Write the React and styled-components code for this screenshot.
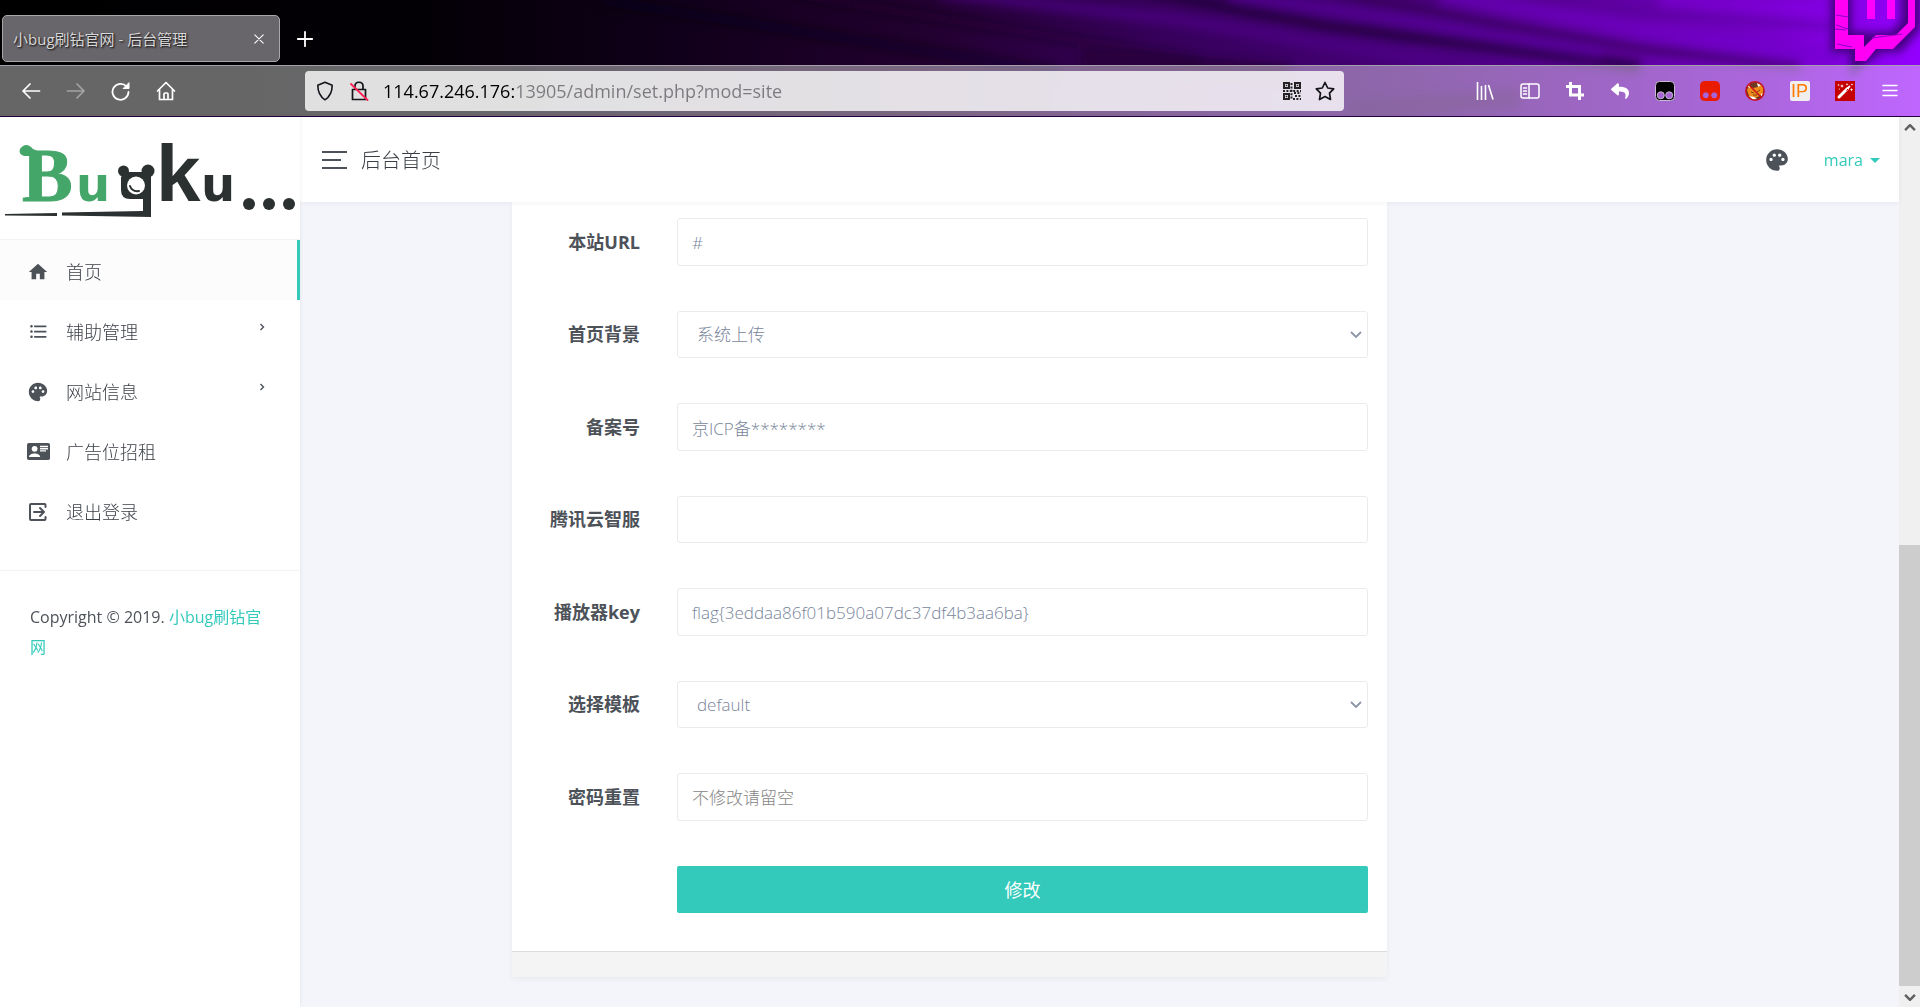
import React from 'react';
import styled, { createGlobalStyle } from 'styled-components';
import { MdHome, MdFormatListBulleted, MdPalette } from 'react-icons/md';
import { FaReply } from 'react-icons/fa';

const teal = '#33cabb';
const ink = '#4d5259';
const thinInk = '#3a3f46';
const fieldInk = '#78859a';
const rule = '#ebebeb';

const GlobalStyle = createGlobalStyle`
  *, *::before, *::after { box-sizing: border-box; }
  body {
    margin: 0;
    overflow: hidden;
    color: ${ink};
    background: #f4f5fa;
    font: 400 16px/24px 'Open Sans', 'Noto Sans CJK SC', sans-serif;
  }
  button, input, select { font: inherit; margin: 0; }
  button { padding: 0; border: 0; background: none; color: inherit; cursor: pointer; }
  a { color: ${teal}; text-decoration: none; }
  svg { display: block; flex: none; }
`;

const Window = styled.div`
  display: flex;
  flex-direction: column;
  height: 100vh;
`;

/* ---------- browser chrome ---------- */

const Chrome = styled.header`
  position: relative;
  flex: none;
  overflow: hidden;
  isolation: isolate;
  background: linear-gradient(90deg, #000 0%, #030005 22%, #0f0018 34%, #22002f 48%, #36005a 60%, #440074 72%, #5a0098 82%, #7500c8 92%, #9400ff 100%);
`;

const ThemeArt = styled.svg`
  position: absolute;
  top: 0;
  right: 0;
  z-index: -1;
`;

const TabStrip = styled.div`
  display: flex;
  align-items: center;
  gap: 5px;
  height: 65px;
  padding: 12px 2px 0;
`;

const Tab = styled.div`
  display: flex;
  align-items: center;
  justify-content: space-between;
  width: 278px;
  height: 47px;
  padding: 0 10px;
  border: 1px solid #a9a7aa;
  border-radius: 5px;
  background: #69666b;
  color: #d8d8d8;
  font-size: 15px;
  text-shadow: 1px 1px 2px #000;
`;

const StripButton = styled.button`
  display: grid;
  place-items: center;
  width: ${p => p.$size}px;
  height: ${p => p.$size}px;
  color: #fff;
`;

const Toolbar = styled.nav`
  display: flex;
  align-items: center;
  height: 52px;
  padding: 0 8px;
  border-top: 1px solid #a49fa8;
  border-bottom: 1px solid #24003c;
  background: rgba(255, 255, 255, 0.4);
`;

const ToolButton = styled.button`
  display: grid;
  place-items: center;
  width: 45px;
  height: 40px;
  color: #fff;
  opacity: ${p => (p.disabled ? 0.4 : 1)};
`;

const UrlBar = styled.div`
  display: flex;
  flex: 1;
  align-items: center;
  gap: 14px;
  height: 40px;
  margin: 0 118px 0 117px;
  padding: 0 9px 0 10px;
  border-radius: 4px;
  background: rgba(255, 255, 255, 0.8);
  color: #15141a;
`;

const UrlInput = styled.input`
  flex: 1;
  min-width: 0;
  height: 40px;
  padding: 0;
  border: 0;
  outline: 0;
  font-size: 18px;
  color: transparent;
  background: linear-gradient(90deg, #000 131px, #7c797e 131px);
  background-clip: text;
  -webkit-background-clip: text;
`;

const IpBadge = styled.span`
  display: grid;
  place-items: center;
  width: 20px;
  height: 20px;
  border-radius: 2px;
  background: #f0eeee;
  color: #ff7a00;
  font: 400 18px/20px 'Liberation Sans', sans-serif;
`;

const WandBadge = styled.span`
  display: grid;
  place-items: center;
  width: 20px;
  height: 20px;
  background: #c40000;
`;

/* ---------- page ---------- */

const Page = styled.div`
  display: flex;
  flex: 1;
  min-height: 0;
`;

const Sidebar = styled.aside`
  flex: none;
  width: 300px;
  background: #fff;
  box-shadow: 0 0 4px rgba(0, 0, 0, 0.08);
  z-index: 2;
`;

const Brand = styled.a`
  display: block;
  height: 123px;
  border-bottom: 1px solid #f3f3f3;
`;

const Menu = styled.ul`
  margin: 0;
  padding: 0 0 30px;
  border-bottom: 1px solid #f3f3f3;
  list-style: none;
`;

const MenuLink = styled.a`
  display: grid;
  grid-template-columns: 22px 1fr 6px;
  align-items: center;
  column-gap: 17px;
  height: 60px;
  padding: 3px 32px 0 27px;
  border-right: 3px solid ${p => (p.$active ? teal : 'transparent')};
  background: ${p => (p.$active ? '#fcfcfc' : '#fff')};
  color: ${thinInk};
  font-size: 18px;
  font-weight: 300;

  & > svg { justify-self: center; color: ${ink}; }
  & > svg:last-child { margin-bottom: 9px; }
`;

const Copyright = styled.p`
  margin: 0;
  padding: 31px 30px;
  font-size: 16px;
  line-height: 30px;
`;

const Main = styled.main`
  display: flex;
  flex: 1;
  flex-direction: column;
  min-width: 0;
`;

const TopBar = styled.div`
  display: flex;
  flex: none;
  align-items: center;
  height: 85px;
  padding: 1px 19px 0 22px;
  background: #fff;
  box-shadow: 0 1px 6px rgba(0, 0, 0, 0.05);
  z-index: 1;
`;

const TopTitle = styled.h1`
  flex: 1;
  margin: 0 0 0 14px;
  padding-top: 2px;
  color: ${thinInk};
  font-size: 20px;
  line-height: 30px;
  font-weight: 300;
`;

const UserMenu = styled.button`
  display: flex;
  align-items: center;
  gap: 7px;
  margin-left: 34px;
  color: ${teal};
`;

const Content = styled.div`
  display: grid;
  grid-template-columns: 212fr 875fr 512fr;
  align-items: start;
`;

const Card = styled.form`
  grid-column: 2;
  background: #fff;
  box-shadow: 0 2px 6px rgba(0, 0, 0, 0.05);
`;

const Fields = styled.div`
  display: grid;
  gap: 45px;
  padding: 16px 19px 38px 34px;
`;

const Field = styled.div`
  display: grid;
  grid-template-columns: 94px 1fr;
  column-gap: 37px;
  align-items: center;
  height: 48px;

  &:nth-child(even) { height: 47px; }
`;

const Label = styled.label`
  justify-self: end;
  padding-bottom: 1px;
  font-size: 18px;
  font-weight: 700;
  white-space: nowrap;
`;

const Input = styled.input`
  width: 100%;
  height: 100%;
  padding: 1px 14px 0;
  border: 1px solid ${rule};
  border-radius: 3px;
  outline: 0;
  background: #fff;
  color: ${fieldInk};
  font-size: 17px;
  font-weight: 300;

  &::placeholder { color: #858585; opacity: 1; }
`;

const SelectBox = styled.div`
  display: grid;
  align-items: center;
  height: 100%;

  & > * { grid-area: 1 / 1; }
  & > svg {
    justify-self: end;
    margin-right: 6px;
    pointer-events: none;
    color: #8b95a5;
  }
`;

const Select = styled.select`
  width: 100%;
  height: 100%;
  padding: 1px 19px 0;
  border: 1px solid ${rule};
  border-radius: 3px;
  outline: 0;
  appearance: none;
  background: #fff;
  color: ${fieldInk};
  font-size: 17px;
  font-weight: 300;
`;

const Submit = styled.button`
  grid-column: 2;
  height: 100%;
  border-radius: 2px;
  background: ${teal};
  color: #fff;
  font-size: 18px;
`;

const CardFooter = styled.div`
  height: 26px;
  border-top: 1px solid #dcdcdc;
  background: #f4f4f4;
`;

const Scrollbar = styled.div`
  display: flex;
  flex: none;
  flex-direction: column;
  justify-content: space-between;
  width: 21px;
  background: #f0f0f0;
  color: #606060;
`;

const ScrollArrow = styled.button`
  display: grid;
  place-items: center;
  height: 21px;
`;

const ScrollTrack = styled.div`
  display: flex;
  flex: 1;
  flex-direction: column;
  justify-content: flex-end;
`;

const ScrollThumb = styled.div`
  height: 52%;
  background: #cdcdcd;
`;

/* ---------- drawings ---------- */

const Line = ({ size = 20, width = 2, children, ...rest }) => (
  <svg width={size} height={size} viewBox="0 0 20 20" fill="none" stroke="currentColor"
    strokeWidth={width} strokeLinecap="round" strokeLinejoin="round" aria-hidden="true" {...rest}>
    {children}
  </svg>
);

const Theme = () => (
  <ThemeArt width="1920" height="117" viewBox="0 0 1920 117" aria-hidden="true">
    <defs>
      <filter id="soft" x="-10%" y="-100%" width="120%" height="300%"><feGaussianBlur stdDeviation="5" /></filter>
      <filter id="halo" x="-50%" y="-50%" width="200%" height="200%"><feGaussianBlur stdDeviation="4" /></filter>
    </defs>
    <g filter="url(#soft)" fill="none">
      <path d="M600 0 L1060 72" stroke="#0b0012" strokeWidth="10" opacity=".4" />
      <path d="M790 -6 L1200 60" stroke="#14001f" strokeWidth="9" opacity=".35" />
      <path d="M1080 58 L1290 72" stroke="#1c002b" strokeWidth="18" opacity=".55" />
      <path d="M940 -8 L1180 20 L1440 62" stroke="#50008a" strokeWidth="14" opacity=".6" />
      <path d="M1150 -8 L1320 25 L1500 48 L1640 66" stroke="#22003a" strokeWidth="12" opacity=".75" />
      <path d="M1230 -6 L1440 26 L1600 52" stroke="#5c00a4" strokeWidth="12" opacity=".6" />
      <path d="M1340 -6 L1492 24 L1640 48 L1800 66" stroke="#30004e" strokeWidth="10" opacity=".6" />
      <path d="M1440 -6 L1640 30 L1840 58" stroke="#7200cc" strokeWidth="18" opacity=".55" />
      <path d="M1610 10 L1830 26" stroke="#500090" strokeWidth="8" opacity=".4" />
      <path d="M1660 0 L1830 10" stroke="#8600e8" strokeWidth="14" opacity=".4" />
      <path d="M1350 112 L1520 98" stroke="#2c0048" strokeWidth="20" opacity=".4" />
    </g>
    <path d="M1841 -8 V42 H1860 V56 L1878 42 H1896 L1911 25 V-8" fill="none" stroke="#2c0058" strokeWidth="20" opacity=".75" filter="url(#halo)" />
    <path d="M1835 0 H1848 V35 H1864 V47 L1876 35 H1896 L1908 23 V0 H1915 V27 L1893 49 H1876 L1866 61 H1855 V49 H1835 Z" fill="#ff00f5" />
    <path d="M1867 0 H1875 V19 H1867 Z M1887 0 H1895 V19 H1887 Z" fill="#f0f" />
    <path d="M1836 15 L1848 17 M1836 25 L1848 29 M1835 29 L1846 30 M1837 44 L1852 47 M1872 38 L1902 34" stroke="#8a00c8" strokeWidth="1" />
  </ThemeArt>
);

const Shield = () => (
  <Line width="1.6"><path d="M10 1.2 L17.2 4.2 C17.2 11 15 15.5 10 18.8 C5 15.5 2.8 11 2.8 4.2 Z" /></Line>
);

const BrokenLock = () => (
  <Line width="1.7">
    <path d="M6 8 V5 C6 0 14 0 14 5 V8 M3.5 8.5 H16.5 V18.5 H3.5 Z" />
    <path d="M2 3 L18.5 19" stroke="#ff2056" strokeWidth="1.8" />
  </Line>
);

const QrCode = () => (
  <svg width="18" height="18" viewBox="0 0 18 18" fill="none" stroke="#222" aria-hidden="true">
    <path strokeWidth="2" d="M1 1 H6 V6 H1 Z M12 1 H17 V6 H12 Z M1 12 H6 V17 H1 Z" />
    <path strokeWidth="2" strokeDasharray="2 1.4" d="M8.5 1 V17 M0 9 H18 M11 11 H18 M12 14 H18 M10 17 H18" />
    <path fill="#222" stroke="none" d="M2.7 2.7h1.6v1.6H2.7zM13.7 2.7h1.6v1.6h-1.6zM2.7 13.7h1.6v1.6H2.7z" />
  </svg>
);

const Goggles = ({ body, rim }) => (
  <svg width="20" height="20" viewBox="0 0 20 20" aria-hidden="true">
    <rect x=".5" y=".5" width="19" height="19" rx="4" fill={body} stroke={rim} />
    <circle cx="5.8" cy="14.3" r="3.5" fill="#a864d4" stroke={rim} />
    <circle cx="14.2" cy="14.3" r="3.5" fill="#a864d4" stroke={rim} />
  </svg>
);

const NoFox = () => (
  <svg width="20" height="20" viewBox="0 0 20 20" aria-hidden="true">
    <circle cx="10" cy="10" r="9" fill="#6b3a22" />
    <path d="M2 9 L4 5 L8 7 L13 6 L17 3 L18.5 9 L17 14 L10 17 L4 15 Z" fill="#f08c1c" />
    <path d="M2 5 L5 3 L5 7 Z M12 2 L16 4 L13 6 Z M4 15 L9 16 L12 18 L8 19 Z M16 13 L18 12 L16 16 Z" fill="#fff" />
    <path d="M6 11 L9 12 M12 11 L15 9 M8 14 H12" stroke="#7a3d12" strokeWidth="1" />
    <circle cx="10" cy="10" r="9.2" fill="none" stroke="#c8101c" strokeWidth="1.4" />
    <path d="M3.5 3.5 L16.5 16.5" stroke="#c8101c" strokeWidth="1.5" />
  </svg>
);

const Wand = () => (
  <svg width="20" height="20" viewBox="0 0 20 20" fill="#fff" aria-hidden="true">
    <path d="M4 16 L12.500 7.500" stroke="#fff" strokeWidth="3" strokeLinecap="round" />
    <path d="M12.500 7.500 L14.500 5.500" stroke="#fff" strokeWidth="1.800" strokeLinecap="round" />
    <path d="M11.500 9.500 L13 8" stroke="#c40000" strokeWidth="1" />
    <path d="M7 3l.6 1.400L9 5l-1.400.6L7 7l-.6-1.400L5 5l1.400-.6zM16.500 7l.5 1.200 1.200.5-1.200.5-.5 1.200-.5-1.200-1.200-.5 1.200-.5zM12 2l.4 1 1 .4-1 .4-.4 1-.4-1-1-.4 1-.4z" />
    <circle cx="3.500" cy="4" r=".8" /><circle cx="17" cy="3.500" r=".8" /><circle cx="4.500" cy="8" r=".6" />
  </svg>
);

const CardIcon = () => (
  <svg width="23" height="17" viewBox="0 0 23 17" aria-hidden="true">
    <rect width="23" height="17" rx="1.8" fill={ink} />
    <circle cx="7.6" cy="5.8" r="2.9" fill="#fff" />
    <path d="M2 14 C2 9.3 13.2 9.3 13.2 14 Z M13 2.8h8v1.4h-8zM13 5h8v1.4h-8zM13 7.2h6v1.4h-6z" fill="#fff" />
  </svg>
);

const ExitIcon = () => (
  <Line size={20}>
    <path d="M17.5 5 V3 Q17.5 2 16.5 2 H3 Q2 2 2 3 V17 Q2 18 3 18 H16.5 Q17.5 18 17.5 17 V15" />
    <path d="M6 10 H16 M12 6 L16 10 L12 14" />
  </Line>
);

const Chevron = () => (
  <svg width="6" height="8" viewBox="0 0 6 8" fill="none" stroke={ink} strokeWidth="1.4" aria-hidden="true">
    <path d="M1.5 1 L4.5 4 L1.5 7" />
  </svg>
);

const Logo = () => (
  <svg width="300" height="122" viewBox="0 117 300 122" fill="#2b3130" role="img" aria-label="Bugku">
    <g fill="#45a669">
      <path d="M20 149 Q26 141 33 149 L40 152 V156 H24 Q18 154 20 149 Z" />
      <text x="22" y="201" fontFamily="Liberation Serif, serif" fontWeight="700" fontSize="76" stroke="#45a669" strokeWidth="1">B</text>
      <text x="76" y="201" fontFamily="DejaVu Sans, sans-serif" fontWeight="700" fontSize="48">u</text>
    </g>
    <circle cx="123.500" cy="171" r="5.500" />
    <circle cx="148" cy="171" r="6.500" />
    <path d="M126 172 H151 V217 L62 215.500 V212.500 L143 211 V199 H130 Q121 199 121 190 V177 Z" />
    <circle cx="136" cy="185.500" r="9" fill="#fff" />
    <path d="M130 186 Q132 192 139 191" fill="none" stroke="#2b3130" strokeWidth="2" strokeLinecap="round" />
    <path d="M5 214 L57 213 V216 L5 215.500 Z" />
    <text y="201" fontWeight="700">
      <tspan x="156" fontFamily="Liberation Sans, sans-serif" fontSize="80">k</tspan>
      <tspan x="201" fontFamily="DejaVu Sans, sans-serif" fontSize="48">u</tspan>
    </text>
    <circle cx="249" cy="204" r="6" />
    <circle cx="269" cy="204" r="6" />
    <circle cx="289" cy="204" r="6" />
  </svg>
);

const tools = [
  ['Library', <Line width="1.6" strokeLinecap="butt"><path d="M2.500 1 V19 M6.500 5 V19 M10.500 4 V19 M13.500 4 L18 18.500" /></Line>],
  ['Sidebars', <Line width="1.5"><rect x="1" y="3" width="18" height="14" rx="2" /><path d="M9 3 V17 M3.500 7 H6.500 M3.500 10 H6.500 M3.500 13 H6.500" /></Line>],
  ['Screenshot', <Line width="3" strokeLinecap="butt" strokeLinejoin="miter"><path d="M5.500 1 V14 H19 M1 5.500 H14.500 V19" /></Line>],
  ['Undo close tab', <FaReply size={18} />],
  ['Script manager', <Goggles body="#000" rim="#c9bcd2" />],
  ['Script manager beta', <Goggles body="#ea1c00" rim="#ea1c00" />],
  ['Proxy switcher', <NoFox />],
  ['IP lookup', <IpBadge>IP</IpBadge>],
  ['Cleaner', <WandBadge><Wand /></WandBadge>],
  ['Menu', <Line width="1.5"><path d="M3 4.500 H17 M3 9.500 H17 M3 14.500 H17" /></Line>],
];

const menu = [
  { text: '首页', icon: <MdHome size={22} />, active: true },
  { text: '辅助管理', icon: <MdFormatListBulleted size={21} />, more: true },
  { text: '网站信息', icon: <MdPalette size={22} />, more: true },
  { text: '广告位招租', icon: <CardIcon /> },
  { text: '退出登录', icon: <ExitIcon /> },
];

const fields = [
  { id: 'url', label: '本站URL', value: '#' },
  { id: 'background', label: '首页背景', options: ['系统上传'] },
  { id: 'icp', label: '备案号', value: '京ICP备********' },
  { id: 'service', label: '腾讯云智服', value: '' },
  { id: 'player', label: '播放器key', value: 'flag{3eddaa86f01b590a07dc37df4b3aa6ba}' },
  { id: 'template', label: '选择模板', options: ['default'] },
  { id: 'password', label: '密码重置', placeholder: '不修改请留空' },
];

const BrowserChrome = () => (
  <Chrome>
    <Theme />
    <TabStrip>
      <Tab>
        小bug刷钻官网 - 后台管理
        <StripButton $size={20} aria-label="Close tab"><Line size={12} width="1.8"><path d="M3 3 L17 17 M17 3 L3 17" /></Line></StripButton>
      </Tab>
      <StripButton $size={40} aria-label="New tab"><Line size={18} width="2"><path d="M10 2 V18 M2 10 H18" /></Line></StripButton>
    </TabStrip>
    <Toolbar>
      <ToolButton aria-label="Back"><Line width="1.7"><path d="M18.500 10 H2 M9 3 L2 10 L9 17" /></Line></ToolButton>
      <ToolButton aria-label="Forward" disabled><Line width="1.7"><path d="M1.500 10 H18 M11 3 L18 10 L11 17" /></Line></ToolButton>
      <ToolButton aria-label="Reload"><Line width="1.8"><path d="M17.500 11 A8 8 0 1 1 15.500 5.500" /><path d="M18 2 V7.500 H12.500 Z" fill="currentColor" strokeWidth="1" /></Line></ToolButton>
      <ToolButton aria-label="Home"><Line width="1.700"><path d="M1.500 10 L10 1.500 L18.500 10 M3.500 8.500 V18.500 H16.500 V8.500 M8 18.500 V13 Q8 12 9 12 H11 Q12 12 12 13 V18.500" /></Line></ToolButton>
      <UrlBar>
        <Shield />
        <BrokenLock />
        <UrlInput aria-label="Address" defaultValue="114.67.246.176:13905/admin/set.php?mod=site" />
        <QrCode />
        <Line width="1.7"><path d="M10 1.500 L12.700 7 L18.700 7.800 L14.500 12.200 L15.500 18.500 L10 15.500 L4.500 18.500 L5.500 12.200 L1.300 7.800 L7.300 7 Z" /></Line>
      </UrlBar>
      {tools.map(([name, icon]) => <ToolButton key={name} aria-label={name}>{icon}</ToolButton>)}
    </Toolbar>
  </Chrome>
);

const FormField = ({ id, label, value, placeholder, options }) => (
  <Field>
    <Label htmlFor={id}>{label}</Label>
    {options ? (
      <SelectBox>
        <Select id={id}>{options.map(o => <option key={o}>{o}</option>)}</Select>
        <svg width="12" height="8" viewBox="0 0 12 8" fill="none" stroke="currentColor" strokeWidth="1.800" aria-hidden="true"><path d="M1 1 L6 6 L11 1" /></svg>
      </SelectBox>
    ) : (
      <Input id={id} type="text" defaultValue={value} placeholder={placeholder} />
    )}
  </Field>
);

export default function App() {
  return (
    <Window>
      <GlobalStyle />
      <BrowserChrome />
      <Page>
        <Sidebar>
          <Brand href="#"><Logo /></Brand>
          <Menu>
            {menu.map(({ text, icon, active, more }) => (
              <li key={text}>
                <MenuLink href="#" $active={active}>
                  {icon}
                  <span>{text}</span>
                  {more && <Chevron />}
                </MenuLink>
              </li>
            ))}
          </Menu>
          <Copyright>Copyright © 2019. <a href="#">小bug刷钻官网</a></Copyright>
        </Sidebar>
        <Main>
          <TopBar>
            <button aria-label="Toggle sidebar">
              <svg width="25" height="18" viewBox="0 0 25 18" fill={ink} aria-hidden="true">
                <path d="M0 0 H25 V2 H0 Z M0 8 H19 V10 H0 Z M0 16 H25 V18 H0 Z" />
              </svg>
            </button>
            <TopTitle>后台首页</TopTitle>
            <button aria-label="Theme colour"><MdPalette size={26} /></button>
            <UserMenu>
              mara
              <svg width="10" height="5" viewBox="0 0 10 5" fill="currentColor" aria-hidden="true"><path d="M0 0 H10 L5 5 Z" /></svg>
            </UserMenu>
          </TopBar>
          <Content>
            <Card onSubmit={e => e.preventDefault()}>
              <Fields>
                {fields.map(f => <FormField key={f.id} {...f} />)}
                <Field><Submit type="submit">修改</Submit></Field>
              </Fields>
              <CardFooter />
            </Card>
          </Content>
        </Main>
        <Scrollbar>
          <ScrollArrow aria-label="Scroll up"><Line size={14} width="3.500" strokeLinecap="butt"><path d="M3 13 L10 6 L17 13" /></Line></ScrollArrow>
          <ScrollTrack><ScrollThumb /></ScrollTrack>
          <ScrollArrow aria-label="Scroll down"><Line size={14} width="3.500" strokeLinecap="butt"><path d="M3 7 L10 14 L17 7" /></Line></ScrollArrow>
        </Scrollbar>
      </Page>
    </Window>
  );
}
